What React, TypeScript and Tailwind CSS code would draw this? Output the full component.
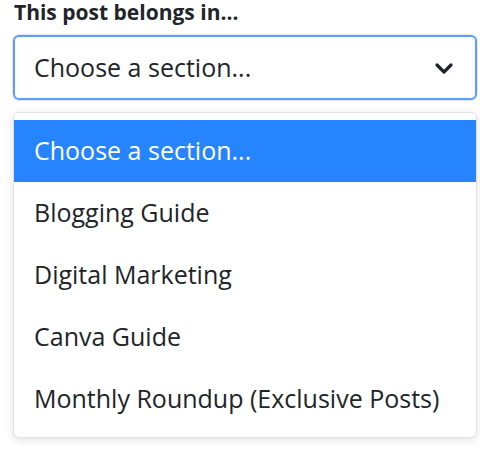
import { useState } from 'react'

const sections = [
    'Choose a section...',
    'Blogging Guide',
    'Digital Marketing',
    'Canva Guide',
    'Monthly Roundup (Exclusive Posts)',
]

function App() {
    const [active] = useState(0)

    return (
        <div
            className="relative h-[449px] w-[480px] overflow-hidden bg-white text-[#212529]"
            style={{ fontFamily: '"Open Sans", "Noto Sans", sans-serif' }}
        >
            <div className="pr-[3px] pl-[13px]">
                <div className="pl-[1px] text-[21px] leading-[25px] font-bold">This post belongs in...</div>
                <div className="mt-[10px] flex h-[65px] items-center justify-between rounded-[6px] border-2 border-[#5c9dfd] pr-[21px] pl-[19px] shadow-[0_0_0_1px_#dfe6f0]">
                    <span className="text-[25px]">Choose a section...</span>
                    <svg width="20" height="14" viewBox="0 0 20 14" fill="none">
                        <path
                            d="M3 4l7 7 7-7"
                            stroke="#212529"
                            strokeWidth="3.2"
                            strokeLinecap="round"
                            strokeLinejoin="round"
                        />
                    </svg>
                </div>
            </div>

            {/* open options list */}
            <div className="absolute top-[112px] left-[13px] w-[464px] rounded-[6px] border border-[#e2e2e2] bg-white py-[7px] shadow-[0_2px_8px_rgba(0,0,0,0.12)]">
                {sections.map((s, i) => (
                    <div
                        key={s}
                        className={
                            i === active
                                ? 'flex h-[62px] items-center bg-[#2684ff] pl-[20px] text-[25px] text-white'
                                : 'flex h-[62px] items-center pl-[20px] text-[25px]'
                        }
                    >
                        {s}
                    </div>
                ))}
            </div>
        </div>
    )
}

export default App
